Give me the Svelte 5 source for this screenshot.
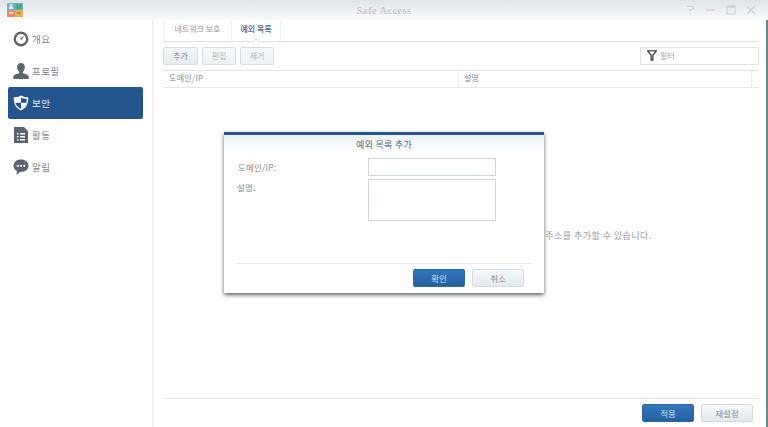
<script>
  const nav = [
    { id: "overview", label: "개요" },
    { id: "profile", label: "프로필" },
    { id: "security", label: "보안" },
    { id: "activity", label: "활동" },
    { id: "notify", label: "알림" },
  ];
</script>

<div class="window">
  <header class="titlebar">
    <svg class="logo" width="16" height="14" viewBox="0 0 16 14">
      <rect x="0" y="0" width="8" height="7" fill="#6db4dc" />
      <rect x="8" y="0" width="8" height="7" fill="#62b8a0" />
      <rect x="0" y="7" width="8" height="7" fill="#e68a70" />
      <rect x="8" y="7" width="8" height="7" fill="#e4b25e" />
      <circle cx="4" cy="2.500" r="1.400" fill="#eef6fb" />
      <rect x="2" y="4" width="4" height="2" fill="#eef6fb" />
      <rect x="10" y="2" width="4" height="3" fill="none" stroke="#3f9a7c" />
      <rect x="2" y="9" width="4" height="2" fill="#f7d6c8" />
      <rect x="10" y="9" width="4" height="2" fill="#c2913f" />
    </svg>
    <span class="title">Safe Access</span>
    <div class="controls">
      <svg width="100" height="12" viewBox="0 0 100 12" fill="none" stroke="#ccd2d7" stroke-width="1.200">
        <path d="M1 2.500h6v3H4v2M4 9v1.500" />
        <path d="M20 6h9" />
        <rect x="41" y="2" width="8" height="8" />
        <path d="M41 2.800h8" stroke-width="2" />
        <path d="M61 2l8 8M69 2l-8 8" />
      </svg>
    </div>
  </header>

  <div class="body">
    <nav class="sidebar">
      {#each nav as item}
        <div class="nav-item" class:active={item.id === "security"}>
          <span class="nav-icon">
            {#if item.id === "overview"}
              <svg width="18" height="18" viewBox="0 0 18 18">
                <circle cx="9" cy="9" r="7" fill="#fff" stroke="#5d6470" stroke-width="2.600" />
                <path d="M12.500 5L9.800 10.200 8 8.600z" fill="#5d6470" />
              </svg>
            {:else if item.id === "profile"}
              <svg width="16" height="16" viewBox="0 0 16 16">
                <path d="M8 0c2.600 0 3.800 1.900 3.800 4.200 0 2-.9 3.800-1.900 4.700v1.300c2 .7 5.500 1.500 5.800 3.200V16H.3v-2.600c.3-1.700 3.800-2.500 5.800-3.200V8.900C5.100 8 4.200 6.200 4.200 4.200 4.200 1.900 5.400 0 8 0z" fill="#5d6470" />
              </svg>
            {:else if item.id === "security"}
              <svg width="16" height="16" viewBox="0 0 16 16">
                <path d="M8 .5c2 1.300 4.500 1.800 7.300 1.800 0 6-1.300 10.500-7.300 13.200C2 12.800.7 8.300.7 2.300 3.500 2.300 6 1.800 8 .5z" fill="#fff" />
                <path d="M8 2.800v5h5.400c.2-1 .3-2 .3-3.900-2-.1-4-.4-5.700-1.100zM8 7.800H2.500c.4 2.300 1.900 4.500 5.500 6z" fill="#24558f" />
              </svg>
            {:else if item.id === "activity"}
              <svg width="14" height="16" viewBox="0 0 14 16">
                <path d="M0 0h10l4 4v12H0z" fill="#5d6470" />
                <path d="M3 6h1.500v1.500H3zM6 6h5v1.500H6zM3 9h1.500v1.500H3zM6 9h5v1.500H6zM3 12h1.500v1.500H3zM6 12h5v1.500H6z" fill="#fff" />
              </svg>
            {:else}
              <svg width="16" height="16" viewBox="0 0 16 16">
                <path d="M8 .5c4.300 0 7.500 2.700 7.500 6.300S12.300 13 8 13c-.4 0-.8 0-1.200-.1-.9 1.200-2.200 2.300-3.800 2.600.7-.9 1-2 1-3.300C2 11.100.5 9.200.5 6.800.5 3.200 3.700.5 8 .5z" fill="#5d6470" />
                <circle cx="4.800" cy="6.800" r="1.100" fill="#fff" />
                <circle cx="8" cy="6.800" r="1.100" fill="#fff" />
                <circle cx="11.200" cy="6.800" r="1.100" fill="#fff" />
              </svg>
            {/if}
          </span>
          <span>{item.label}</span>
        </div>
      {/each}
    </nav>

    <main class="main">
      <div class="tabs">
        <div class="tab">네트워크 보호</div>
        <div class="tab current">예외 목록</div>
      </div>

      <div class="toolbar">
        <button class="btn">추가</button>
        <button class="btn off">편집</button>
        <button class="btn off">제거</button>
        <div class="filter">
          <svg width="10" height="11" viewBox="0 0 12 13" fill="none" stroke="#3f4650" stroke-width="1.600">
            <path d="M.8 1h10.400L7 6.200V12H5V6.200z" />
          </svg>
          <span>필터</span>
        </div>
      </div>

      <div class="thead">
        <div class="th first">도메인/IP</div>
        <div class="th second">설명</div>
        <div class="th last"></div>
      </div>

      <div class="empty">
        <span>예외 목록이 현재 비어 있습니다. 여기에서 허용할 도메인 이름 또는 IP 주소를 추가할 수 있습니다.</span>
      </div>

      <div class="footer">
        <button class="action primary">적용</button>
        <button class="action">재설정</button>
      </div>
    </main>
  </div>

  <div class="dialog">
    <div class="dialog-title">예외 목록 추가</div>
    <div class="dialog-form">
      <div class="row">
        <label for="domain" class="indent">도메인/IP:</label>
        <input id="domain" type="text" />
      </div>
      <div class="row">
        <label for="desc">설명:</label>
        <textarea id="desc"></textarea>
      </div>
    </div>
    <div class="dialog-footer">
      <button class="action primary">확인</button>
      <button class="action">취소</button>
    </div>
  </div>
</div>

<style>
  :global(body) {
    margin: 0;
    background: #fff;
  }
  .window {
    position: relative;
    width: 768px;
    height: 427px;
    overflow: hidden;
    display: flex;
    flex-direction: column;
    background: #fff;
    font-family: "Noto Sans CJK KR", "Liberation Sans", sans-serif;
    font-size: 9px;
    color: #6a7380;
  }
  .titlebar {
    height: 20px;
    flex: none;
    position: relative;
    display: flex;
    align-items: center;
    justify-content: center;
    background: linear-gradient(#dfe4e9, #f9fafb);
  }
  .logo {
    position: absolute;
    left: 7px;
    top: 3px;
  }
  .title {
    font-family: "Liberation Serif", serif;
    font-weight: bold;
    font-size: 10px;
    letter-spacing: 0.600px;
    color: #c4cad0;
  }
  .controls {
    position: absolute;
    left: 686px;
    top: 4px;
    display: flex;
  }
  .body {
    flex: 1;
    display: flex;
    min-height: 0;
    border-right: 2px solid #6d8494;
  }
  .sidebar {
    width: 154px;
    flex: none;
    box-sizing: border-box;
    border-right: 2px solid #eef0f2;
    padding: 3px 9px 0 8px;
    display: flex;
    flex-direction: column;
  }
  .nav-item {
    height: 32px;
    display: flex;
    align-items: center;
    gap: 3px;
    padding-left: 5px;
    font-size: 9.500px;
    color: #7b828c;
    letter-spacing: 0.400px;
  }
  .nav-item.active {
    background: #24558f;
    color: #e6edf5;
    border-radius: 2px;
  }
  .nav-icon {
    width: 16px;
    height: 18px;
    display: flex;
    align-items: center;
    justify-content: center;
  }
  .main {
    flex: 1;
    min-width: 0;
    display: flex;
    flex-direction: column;
    padding: 0 7px 0 9px;
  }
  .tabs {
    height: 21px;
    flex: none;
    display: flex;
    border-bottom: 1px solid #dfe3e7;
  }
  .tab {
    position: relative;
    width: 68px;
    box-sizing: border-box;
    text-align: center;
    line-height: 17px;
    font-size: 8px;
    color: #8f97a0;
    border-left: 1px solid #f0f2f4;
  }
  .tab.current {
    width: 50px;
    color: #46668c;
    font-weight: 500;
    border-right: 1px solid #f0f2f4;
  }
  .tab.current::after {
    content: "";
    position: absolute;
    left: 21px;
    bottom: -1px;
    width: 5px;
    height: 5px;
    background: #fff;
    border-left: 1px solid #dfe3e7;
    border-top: 1px solid #dfe3e7;
    transform: translateY(3px) rotate(45deg);
  }
  .toolbar {
    height: 18px;
    flex: none;
    margin-top: 5px;
    display: flex;
    gap: 4px;
    align-items: stretch;
  }
  .btn {
    width: 35px;
    padding: 0 0 2px;
    font: inherit;
    font-size: 8px;
    color: #7b848f;
    background: linear-gradient(#f4f7f9, #e6ebef);
    border: 1px solid #d6dce1;
    border-radius: 2px;
  }
  .btn.off {
    width: 34px;
    color: #b0b7be;
    background: linear-gradient(#f6f8fa, #eff2f5);
  }
  .filter {
    margin-left: auto;
    width: 119px;
    box-sizing: border-box;
    border: 1px solid #dfe3e7;
    display: flex;
    align-items: center;
    gap: 3px;
    padding: 0 0 1px 6px;
    font-size: 8px;
    color: #a0a7ae;
  }
  .thead {
    height: 18px;
    flex: none;
    margin-top: 5px;
    display: flex;
    box-sizing: border-box;
    border-top: 1px solid #e3e6ea;
    border-bottom: 1px solid #e3e6ea;
    font-size: 8px;
    color: #868e98;
    line-height: 14px;
  }
  .th.first {
    width: 296px;
    padding-left: 6px;
    box-sizing: border-box;
    border-right: 1px solid #eceef1;
    letter-spacing: 0.300px;
  }
  .th.second {
    flex: 1;
    padding-left: 5px;
    border-right: 1px solid #eceef1;
  }
  .th.last {
    width: 7px;
  }
  .empty {
    flex: 1;
    display: flex;
    align-items: center;
    justify-content: center;
    font-size: 9px;
    color: #979ea6;
    letter-spacing: 0.450px;
    padding-bottom: 15px;
    white-space: nowrap;
  }
  .footer {
    height: 29px;
    flex: none;
    box-sizing: border-box;
    border-top: 1px solid #e3e6ea;
    display: flex;
    justify-content: flex-end;
    gap: 7px;
    padding: 5px 6px 0 0;
  }
  .action {
    width: 52px;
    height: 18px;
    padding: 0 0 1px;
    font: inherit;
    font-size: 8.500px;
    color: #828b95;
    background: linear-gradient(#f6f8fa, #e4e9ed);
    border: 1px solid #d5dbe0;
    border-radius: 2px;
  }
  .action.primary {
    color: #d3e2f2;
    background: linear-gradient(#3277bd, #235f9f);
    border-color: #2a69aa;
  }
  .dialog {
    position: absolute;
    left: 224px;
    top: 132px;
    width: 320px;
    height: 161px;
    display: flex;
    flex-direction: column;
    box-sizing: border-box;
    background: #fff;
    border-top: 3px solid #24558f;
    box-shadow: 0 2px 4px rgba(40, 50, 60, 0.75);
  }
  .dialog-title {
    height: 20px;
    flex: none;
    text-align: center;
    line-height: 19px;
    font-size: 9px;
    color: #5c6f86;
    letter-spacing: 0.300px;
    background: linear-gradient(#eef2f5, #fff);
  }
  .dialog-form {
    flex: 1;
    display: flex;
    flex-direction: column;
    gap: 3px;
    padding-top: 3px;
  }
  .row {
    display: flex;
    align-items: flex-start;
    font-size: 8.500px;
    color: #858d96;
  }
  .row label {
    width: 144px;
    padding-left: 13px;
    box-sizing: border-box;
    line-height: 17px;
    letter-spacing: 0.200px;
  }
  .row label.indent {
    padding-left: 14px;
    line-height: 18px;
  }
  .row input,
  .row textarea {
    width: 128px;
    margin: 0;
    padding: 0;
    box-sizing: border-box;
    border: 1px solid #ced5db;
    background: #fff;
    outline: none;
    resize: none;
    display: block;
  }
  .row input {
    height: 18px;
  }
  .row textarea {
    height: 42px;
  }
  .dialog-footer {
    flex: none;
    height: 30px;
    box-sizing: border-box;
    margin: 0 13px;
    border-top: 1px solid #e3e6ea;
    display: flex;
    justify-content: flex-end;
    gap: 7px;
    padding: 5px 7px 0 0;
  }
</style>
